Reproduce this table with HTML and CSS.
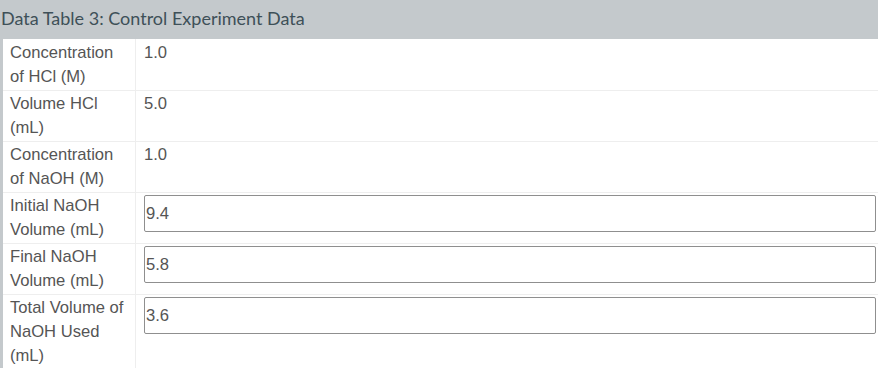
FILE: index.html
```html
<!DOCTYPE html>
<html lang="en">
<head>
<meta charset="utf-8">
<title>Data Table 3</title>
<link rel="stylesheet" href="styles.css">
</head>
<body>
<section class="panel">
  <h2 class="panel-title">Data Table 3: Control Experiment Data</h2>
  <table class="data-table">
    <tbody>
      <tr>
        <th class="label">Concentration of HCl (M)</th>
        <td class="value">1.0</td>
      </tr>
      <tr>
        <th class="label">Volume HCl (mL)</th>
        <td class="value">5.0</td>
      </tr>
      <tr>
        <th class="label">Concentration of NaOH (M)</th>
        <td class="value">1.0</td>
      </tr>
      <tr>
        <th class="label">Initial NaOH Volume (mL)</th>
        <td class="value field"><input class="entry" type="text" value="9.4"></td>
      </tr>
      <tr>
        <th class="label">Final NaOH Volume (mL)</th>
        <td class="value field"><input class="entry" type="text" value="5.8"></td>
      </tr>
      <tr>
        <th class="label">Total Volume of NaOH Used (mL)</th>
        <td class="value field"><input class="entry" type="text" value="3.6"></td>
      </tr>
    </tbody>
  </table>
</section>
</body>
</html>
```
FILE: styles.css
```css
html, body {
  margin: 0;
  padding: 0;
  background: #ffffff;
}

.panel {
  background: #c4c9cc;
  padding-left: 3px;
  width: 878px;
  box-sizing: border-box;
}

.panel-title {
  margin: 0 0 0 -2px;
  height: 39px;
  line-height: 36px;
  font-family: Lato, "Open Sans", sans-serif;
  font-weight: 400;
  font-size: 18px;
  color: #3e5058;
}

.data-table {
  width: 100%;
  border-collapse: collapse;
  background: #ffffff;
  font-family: "Liberation Sans", Arial, sans-serif;
  font-size: 16.6px;
  line-height: 24px;
  color: #555555;
}

.data-table tr + tr {
  border-top: 1px solid #eeeeee;
}

.label {
  width: 118px;
  padding: 1px 7px 1px 7px;
  text-align: left;
  font-weight: 400;
  vertical-align: top;
  border-right: 1px solid #eeeeee;
}

.value {
  padding: 1px 2px 1px 8px;
  vertical-align: top;
}

.data-table tr:first-child > * {
  padding-top: 2px;
}

.value.field {
  padding-top: 2px;
}

.entry {
  display: block;
  box-sizing: border-box;
  width: 100%;
  height: 37px;
  margin: 0;
  padding: 0 0 0 1px;
  border: 1px solid #8f8f8f;
  border-radius: 2px;
  background: #ffffff;
  font-family: "Liberation Sans", Arial, sans-serif;
  font-size: 16.6px;
  color: #555555;
}
```
